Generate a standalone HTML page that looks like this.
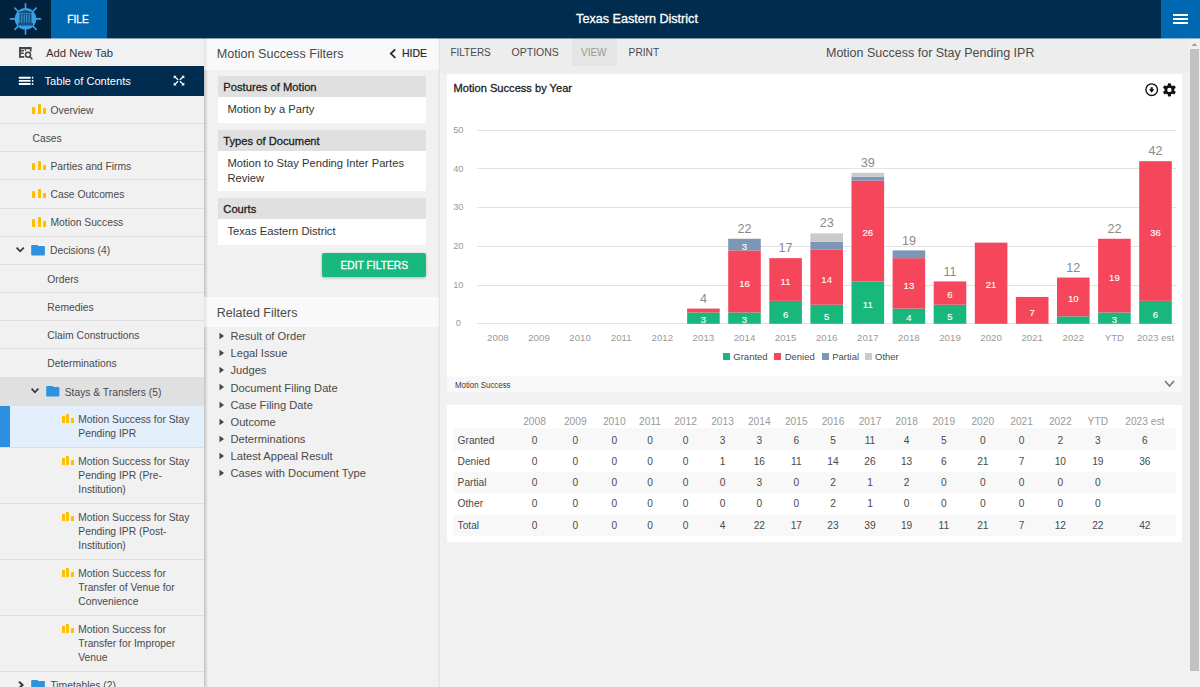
<!DOCTYPE html>
<html><head><meta charset="utf-8"><title>Texas Eastern District</title>
<style>
html,body{margin:0;padding:0;width:1200px;height:687px;overflow:hidden;background:#eeeeee;font-family:"Liberation Sans", sans-serif;}
.r{position:absolute;}
.t{position:absolute;white-space:nowrap;line-height:1;font-family:"Liberation Sans", sans-serif;}
</style></head><body>
<div class="r" style="left:0.00px;top:38.00px;width:204.00px;height:649.00px;background:#f1f1f1;"></div>
<div class="r" style="left:204.00px;top:38.00px;width:235.00px;height:649.00px;background:#f1f1f1;"></div>
<div class="r" style="left:439.00px;top:38.00px;width:761.00px;height:649.00px;background:#f1f1f1;"></div>
<div class="r" style="left:440.00px;top:38.00px;width:760.00px;height:35.00px;background:#ededed;"></div>
<div class="r" style="left:0.00px;top:0.00px;width:1200.00px;height:38.00px;background:#002c4f;"></div>
<div class="r" style="left:0.00px;top:0.00px;width:51.00px;height:38.00px;background:#00223c;"></div>
<div class="r" style="left:51.00px;top:0.00px;width:56.00px;height:38.00px;background:#0067b1;"></div>
<div class="r" style="left:1161.00px;top:0.00px;width:39.00px;height:38.00px;background:#0067b1;"></div>
<div class="t" style="left:50.00px;width:56px;text-align:center;top:15.17px;font-size:10.2px;color:#ffffff;font-weight:normal;-webkit-text-stroke:0.3px #ffffff;">FILE</div>
<div class="t" style="left:537.00px;width:200px;text-align:center;top:12.63px;font-size:12.6px;color:#ffffff;font-weight:normal;-webkit-text-stroke:0.3px #ffffff;">Texas Eastern District</div>
<div class="r" style="left:1173.00px;top:14.00px;width:15.00px;height:2.00px;background:#ffffff;"></div>
<div class="r" style="left:1173.00px;top:18.00px;width:15.00px;height:2.00px;background:#ffffff;"></div>
<div class="r" style="left:1173.00px;top:22.00px;width:15.00px;height:2.00px;background:#ffffff;"></div>
<svg class="r" style="left:0px;top:0px;" width="51" height="38" viewBox="0 0 51 38"><g stroke="#3a9ee4" stroke-width="1.7" stroke-linecap="round"><line x1="35.50" y1="18.80" x2="40.50" y2="18.80"/><line x1="32.57" y1="25.87" x2="36.11" y2="29.41"/><line x1="25.50" y1="28.80" x2="25.50" y2="33.80"/><line x1="18.43" y1="25.87" x2="14.89" y2="29.41"/><line x1="15.50" y1="18.80" x2="10.50" y2="18.80"/><line x1="18.43" y1="11.73" x2="14.89" y2="8.19"/><line x1="25.50" y1="8.80" x2="25.50" y2="3.80"/><line x1="32.57" y1="11.73" x2="36.11" y2="8.19"/></g><circle cx="25.5" cy="18.8" r="10.8" fill="#3a9ee4"/><g fill="#17527f"><path d="M25.5 10 L32.2 12 L32.2 13 L18.8 13 L18.8 12 Z"/><rect x="19.5" y="13.5" width="12" height="9.5"/><rect x="18" y="23" width="15" height="2.6"/></g><g fill="#3a9ee4"><rect x="21.30" y="14.3" width="0.9" height="8.2"/><rect x="23.75" y="14.3" width="0.9" height="8.2"/><rect x="26.20" y="14.3" width="0.9" height="8.2"/><rect x="28.65" y="14.3" width="0.9" height="8.2"/></g></svg>
<div class="t" style="left:46.00px;top:47.93px;font-size:11.3px;color:#333333;font-weight:normal;">Add New Tab</div>
<svg class="r" style="left:14px;top:42px;" width="24" height="20" viewBox="0 0 24 20"><g fill="#454545"><rect x="5.1" y="5.1" width="12.4" height="2.1" rx="0.7"/><rect x="5.1" y="5.1" width="1.8" height="10.6" rx="0.6"/><rect x="15.9" y="5.1" width="1.6" height="4.6"/><rect x="5.1" y="8.1" width="5" height="1.4"/><rect x="5.1" y="10.6" width="4.6" height="1.4"/><rect x="5.1" y="14.1" width="5.2" height="1.6" rx="0.5"/><rect x="11" y="7" width="0.9" height="2"/></g><circle cx="14" cy="12.8" r="2.5" fill="none" stroke="#454545" stroke-width="1.5"/><line x1="15.8" y1="14.6" x2="17.9" y2="16.8" stroke="#454545" stroke-width="1.6" stroke-linecap="round"/></svg>
<div class="r" style="left:0.00px;top:66.00px;width:204.00px;height:30.00px;background:#002c4f;"></div>
<div class="t" style="left:44.50px;top:75.60px;font-size:11.1px;color:#ffffff;font-weight:normal;">Table of Contents</div>
<svg class="r" style="left:14px;top:70px;" width="24" height="20" viewBox="0 0 24 20"><g fill="#ffffff"><rect x="4.8" y="6.75" width="11.8" height="1.9" rx="0.5"/><rect x="17.9" y="6.75" width="1.4" height="1.9"/><rect x="4.8" y="9.95" width="11.8" height="1.9" rx="0.5"/><rect x="17.9" y="9.95" width="1.4" height="1.9"/><rect x="4.8" y="13.1" width="11.8" height="1.9" rx="0.5"/><rect x="17.9" y="13.1" width="1.4" height="1.9"/></g></svg>
<svg class="r" style="left:172px;top:74px;" width="14" height="13" viewBox="0 0 14 13"><g stroke="#ffffff" stroke-width="1.3" fill="none" stroke-linecap="round"><path d="M3 3 L5.8 5.6"/><path d="M11 3 L8.2 5.6"/><path d="M3 10.2 L5.8 7.6"/><path d="M11 10.2 L8.2 7.6"/></g><g fill="#ffffff"><path d="M1.7 1.8 H4.6 L1.7 4.6 Z"/><path d="M12.3 1.8 H9.4 L12.3 4.6 Z"/><path d="M1.7 11.4 H4.6 L1.7 8.6 Z"/><path d="M12.3 11.4 H9.4 L12.3 8.6 Z"/></g></svg>
<div class="r" style="left:32.40px;top:106.80px;width:3.00px;height:7.20px;background:#ffbf00;border-radius:0.6px"></div>
<div class="r" style="left:37.50px;top:104.30px;width:3.00px;height:9.70px;background:#ffbf00;border-radius:0.6px"></div>
<div class="r" style="left:42.60px;top:108.40px;width:3.00px;height:5.60px;background:#ffbf00;border-radius:0.6px"></div>
<div class="t" style="left:50.50px;top:105.58px;font-size:10.3px;color:#4a4a4a;font-weight:normal;">Overview</div>
<div class="r" style="left:0.00px;top:123.15px;width:204.00px;height:1.00px;background:#dedede;"></div>
<div class="t" style="left:32.50px;top:133.73px;font-size:10.3px;color:#4a4a4a;font-weight:normal;">Cases</div>
<div class="r" style="left:0.00px;top:151.30px;width:204.00px;height:1.00px;background:#dedede;"></div>
<div class="r" style="left:32.40px;top:163.10px;width:3.00px;height:7.20px;background:#ffbf00;border-radius:0.6px"></div>
<div class="r" style="left:37.50px;top:160.60px;width:3.00px;height:9.70px;background:#ffbf00;border-radius:0.6px"></div>
<div class="r" style="left:42.60px;top:164.70px;width:3.00px;height:5.60px;background:#ffbf00;border-radius:0.6px"></div>
<div class="t" style="left:50.50px;top:161.88px;font-size:10.3px;color:#4a4a4a;font-weight:normal;">Parties and Firms</div>
<div class="r" style="left:0.00px;top:179.45px;width:204.00px;height:1.00px;background:#dedede;"></div>
<div class="r" style="left:32.40px;top:191.25px;width:3.00px;height:7.20px;background:#ffbf00;border-radius:0.6px"></div>
<div class="r" style="left:37.50px;top:188.75px;width:3.00px;height:9.70px;background:#ffbf00;border-radius:0.6px"></div>
<div class="r" style="left:42.60px;top:192.85px;width:3.00px;height:5.60px;background:#ffbf00;border-radius:0.6px"></div>
<div class="t" style="left:50.50px;top:190.03px;font-size:10.3px;color:#4a4a4a;font-weight:normal;">Case Outcomes</div>
<div class="r" style="left:0.00px;top:207.60px;width:204.00px;height:1.00px;background:#dedede;"></div>
<div class="r" style="left:32.40px;top:219.40px;width:3.00px;height:7.20px;background:#ffbf00;border-radius:0.6px"></div>
<div class="r" style="left:37.50px;top:216.90px;width:3.00px;height:9.70px;background:#ffbf00;border-radius:0.6px"></div>
<div class="r" style="left:42.60px;top:221.00px;width:3.00px;height:5.60px;background:#ffbf00;border-radius:0.6px"></div>
<div class="t" style="left:50.50px;top:218.18px;font-size:10.3px;color:#4a4a4a;font-weight:normal;">Motion Success</div>
<div class="r" style="left:0.00px;top:235.75px;width:204.00px;height:1.00px;background:#dedede;"></div>
<svg class="r" style="left:15.3px;top:246.15000000000003px;" width="10.4" height="7.3" viewBox="0 0 10.4 7.3"><path d="M1.6 1.6 L5.2 5.3999999999999995 L8.8 1.6" fill="none" stroke="#333333" stroke-width="1.6"/></svg>
<svg class="r" style="left:31px;top:245.15000000000003px;" width="15" height="11.3" viewBox="0 0 15 11.3"><path d="M0.2 1 Q0.2 0.1 1 0.1 H6.4 L7.6 1.1 H13.1 Q13.9 1.1 13.9 1.9 V9.700000000000001 Q13.9 10.4 13.1 10.4 H1 Q0.2 10.4 0.2 9.700000000000001 Z" fill="#2d93df"/></svg>
<div class="t" style="left:50.00px;top:246.33px;font-size:10.3px;color:#4a4a4a;font-weight:normal;">Decisions (4)</div>
<div class="r" style="left:0.00px;top:263.90px;width:204.00px;height:1.00px;background:#dedede;"></div>
<div class="t" style="left:47.30px;top:274.58px;font-size:10.3px;color:#4a4a4a;font-weight:normal;">Orders</div>
<div class="r" style="left:0.00px;top:292.05px;width:204.00px;height:1.00px;background:#dedede;"></div>
<div class="t" style="left:47.30px;top:302.73px;font-size:10.3px;color:#4a4a4a;font-weight:normal;">Remedies</div>
<div class="r" style="left:0.00px;top:320.20px;width:204.00px;height:1.00px;background:#dedede;"></div>
<div class="t" style="left:47.30px;top:330.88px;font-size:10.3px;color:#4a4a4a;font-weight:normal;">Claim Constructions</div>
<div class="r" style="left:0.00px;top:348.35px;width:204.00px;height:1.00px;background:#dedede;"></div>
<div class="t" style="left:47.30px;top:359.03px;font-size:10.3px;color:#4a4a4a;font-weight:normal;">Determinations</div>
<div class="r" style="left:0.00px;top:376.50px;width:204.00px;height:1.00px;background:#dedede;"></div>
<div class="r" style="left:0.00px;top:377.50px;width:204.00px;height:28.15px;background:#e0e0e0;"></div>
<svg class="r" style="left:30.3px;top:386.99999999999994px;" width="9.9" height="7.3" viewBox="0 0 9.9 7.3"><path d="M1.6 1.6 L4.95 5.3999999999999995 L8.3 1.6" fill="none" stroke="#333333" stroke-width="1.6"/></svg>
<svg class="r" style="left:45.8px;top:386.29999999999995px;" width="14.5" height="11.3" viewBox="0 0 14.5 11.3"><path d="M0.2 1 Q0.2 0.1 1 0.1 H6.4 L7.6 1.1 H12.6 Q13.4 1.1 13.4 1.9 V9.700000000000001 Q13.4 10.4 12.6 10.4 H1 Q0.2 10.4 0.2 9.700000000000001 Z" fill="#2d93df"/></svg>
<div class="t" style="left:64.70px;top:387.98px;font-size:10.3px;color:#4a4a4a;font-weight:normal;">Stays &amp; Transfers (5)</div>
<div class="r" style="left:0.00px;top:405.65px;width:204.00px;height:42.00px;background:#e3effb;"></div>
<div class="r" style="left:0.00px;top:405.65px;width:10.00px;height:42.00px;background:#2d8fe0;"></div>
<div class="r" style="left:61.80px;top:416.15px;width:3.05px;height:7.00px;background:#ffbf00;border-radius:0.6px"></div>
<div class="r" style="left:66.30px;top:414.05px;width:3.05px;height:9.10px;background:#ffbf00;border-radius:0.6px"></div>
<div class="r" style="left:70.80px;top:418.05px;width:3.05px;height:5.10px;background:#ffbf00;border-radius:0.6px"></div>
<div class="t" style="left:78.30px;top:414.73px;font-size:10.3px;color:#4a4a4a;font-weight:normal;">Motion Success for Stay</div>
<div class="t" style="left:78.30px;top:428.73px;font-size:10.3px;color:#4a4a4a;font-weight:normal;">Pending IPR</div>
<div class="r" style="left:0.00px;top:446.65px;width:204.00px;height:1.00px;background:#dedede;"></div>
<div class="r" style="left:61.80px;top:458.15px;width:3.05px;height:7.00px;background:#ffbf00;border-radius:0.6px"></div>
<div class="r" style="left:66.30px;top:456.05px;width:3.05px;height:9.10px;background:#ffbf00;border-radius:0.6px"></div>
<div class="r" style="left:70.80px;top:460.05px;width:3.05px;height:5.10px;background:#ffbf00;border-radius:0.6px"></div>
<div class="t" style="left:78.30px;top:456.73px;font-size:10.3px;color:#4a4a4a;font-weight:normal;">Motion Success for Stay</div>
<div class="t" style="left:78.30px;top:470.73px;font-size:10.3px;color:#4a4a4a;font-weight:normal;">Pending IPR (Pre-</div>
<div class="t" style="left:78.30px;top:484.73px;font-size:10.3px;color:#4a4a4a;font-weight:normal;">Institution)</div>
<div class="r" style="left:0.00px;top:502.65px;width:204.00px;height:1.00px;background:#dedede;"></div>
<div class="r" style="left:61.80px;top:514.15px;width:3.05px;height:7.00px;background:#ffbf00;border-radius:0.6px"></div>
<div class="r" style="left:66.30px;top:512.05px;width:3.05px;height:9.10px;background:#ffbf00;border-radius:0.6px"></div>
<div class="r" style="left:70.80px;top:516.05px;width:3.05px;height:5.10px;background:#ffbf00;border-radius:0.6px"></div>
<div class="t" style="left:78.30px;top:512.73px;font-size:10.3px;color:#4a4a4a;font-weight:normal;">Motion Success for Stay</div>
<div class="t" style="left:78.30px;top:526.73px;font-size:10.3px;color:#4a4a4a;font-weight:normal;">Pending IPR (Post-</div>
<div class="t" style="left:78.30px;top:540.73px;font-size:10.3px;color:#4a4a4a;font-weight:normal;">Institution)</div>
<div class="r" style="left:0.00px;top:558.65px;width:204.00px;height:1.00px;background:#dedede;"></div>
<div class="r" style="left:61.80px;top:570.15px;width:3.05px;height:7.00px;background:#ffbf00;border-radius:0.6px"></div>
<div class="r" style="left:66.30px;top:568.05px;width:3.05px;height:9.10px;background:#ffbf00;border-radius:0.6px"></div>
<div class="r" style="left:70.80px;top:572.05px;width:3.05px;height:5.10px;background:#ffbf00;border-radius:0.6px"></div>
<div class="t" style="left:78.30px;top:568.73px;font-size:10.3px;color:#4a4a4a;font-weight:normal;">Motion Success for</div>
<div class="t" style="left:78.30px;top:582.73px;font-size:10.3px;color:#4a4a4a;font-weight:normal;">Transfer of Venue for</div>
<div class="t" style="left:78.30px;top:596.73px;font-size:10.3px;color:#4a4a4a;font-weight:normal;">Convenience</div>
<div class="r" style="left:0.00px;top:614.65px;width:204.00px;height:1.00px;background:#dedede;"></div>
<div class="r" style="left:61.80px;top:626.15px;width:3.05px;height:7.00px;background:#ffbf00;border-radius:0.6px"></div>
<div class="r" style="left:66.30px;top:624.05px;width:3.05px;height:9.10px;background:#ffbf00;border-radius:0.6px"></div>
<div class="r" style="left:70.80px;top:628.05px;width:3.05px;height:5.10px;background:#ffbf00;border-radius:0.6px"></div>
<div class="t" style="left:78.30px;top:624.73px;font-size:10.3px;color:#4a4a4a;font-weight:normal;">Motion Success for</div>
<div class="t" style="left:78.30px;top:638.73px;font-size:10.3px;color:#4a4a4a;font-weight:normal;">Transfer for Improper</div>
<div class="t" style="left:78.30px;top:652.73px;font-size:10.3px;color:#4a4a4a;font-weight:normal;">Venue</div>
<div class="r" style="left:0.00px;top:670.65px;width:204.00px;height:1.00px;background:#dedede;"></div>
<svg class="r" style="left:16px;top:679.6499999999999px;" width="10" height="10" viewBox="0 0 10 10"><path d="M3 1.8 L6.6 5 L3 8.2" fill="none" stroke="#333333" stroke-width="1.9"/></svg>
<svg class="r" style="left:31.2px;top:680.2499999999999px;" width="15" height="11.3" viewBox="0 0 15 11.3"><path d="M0.2 1 Q0.2 0.1 1 0.1 H6.4 L7.6 1.1 H13.1 Q13.9 1.1 13.9 1.9 V9.700000000000001 Q13.9 10.4 13.1 10.4 H1 Q0.2 10.4 0.2 9.700000000000001 Z" fill="#2d93df"/></svg>
<div class="t" style="left:50.40px;top:681.33px;font-size:10.3px;color:#4a4a4a;font-weight:normal;">Timetables (2)</div>
<div class="r" style="left:204.00px;top:38.00px;width:4.00px;height:649.00px;background:linear-gradient(to right, rgba(0,0,0,0.10), rgba(0,0,0,0));"></div>
<div class="r" style="left:204.00px;top:38.00px;width:235.00px;height:31.50px;background:#f9f9f9;"></div>
<div class="t" style="left:216.80px;top:48.43px;font-size:12.6px;color:#4a4a4a;font-weight:normal;">Motion Success Filters</div>
<svg class="r" style="left:386px;top:46px;" width="12" height="14" viewBox="0 0 12 14"><path d="M9.3 3.4 L4.8 7.6 L9.3 11.8" fill="none" stroke="#222222" stroke-width="1.7"/></svg>
<div class="t" style="left:402.00px;top:48.31px;font-size:10.5px;color:#222222;font-weight:normal;-webkit-text-stroke:0.15px #222;">HIDE</div>
<div class="r" style="left:218.20px;top:76.30px;width:207.60px;height:20.30px;background:#e0e0e0;"></div>
<div class="t" style="left:223.30px;top:81.92px;font-size:11.2px;color:#222222;font-weight:normal;-webkit-text-stroke:0.3px #222222;">Postures of Motion</div>
<div class="r" style="left:218.20px;top:96.60px;width:207.60px;height:26.40px;background:#ffffff;"></div>
<div class="t" style="left:227.40px;top:104.32px;font-size:11.2px;color:#333333;font-weight:normal;">Motion by a Party</div>
<div class="r" style="left:218.20px;top:129.90px;width:207.60px;height:21.00px;background:#e0e0e0;"></div>
<div class="t" style="left:223.30px;top:135.52px;font-size:11.2px;color:#222222;font-weight:normal;-webkit-text-stroke:0.3px #222222;">Types of Document</div>
<div class="r" style="left:218.20px;top:150.90px;width:207.60px;height:40.40px;background:#ffffff;"></div>
<div class="t" style="left:227.40px;top:157.72px;font-size:11.2px;color:#333333;font-weight:normal;">Motion to Stay Pending Inter Partes</div>
<div class="t" style="left:227.40px;top:172.52px;font-size:11.2px;color:#333333;font-weight:normal;">Review</div>
<div class="r" style="left:218.20px;top:198.20px;width:207.60px;height:20.80px;background:#e0e0e0;"></div>
<div class="t" style="left:223.30px;top:203.82px;font-size:11.2px;color:#222222;font-weight:normal;-webkit-text-stroke:0.3px #222222;">Courts</div>
<div class="r" style="left:218.20px;top:219.00px;width:207.60px;height:26.40px;background:#ffffff;"></div>
<div class="t" style="left:227.40px;top:225.82px;font-size:11.2px;color:#333333;font-weight:normal;">Texas Eastern District</div>
<div class="r" style="left:322.30px;top:252.90px;width:103.40px;height:24.20px;background:#19b87e;box-shadow:0 1px 3px rgba(0,0,0,0.25);border-radius:2px"></div>
<div class="t" style="left:324.30px;width:100px;text-align:center;top:260.98px;font-size:10.3px;color:#ffffff;font-weight:normal;-webkit-text-stroke:0.3px #ffffff;">EDIT FILTERS</div>
<div class="r" style="left:204.00px;top:296.70px;width:235.00px;height:30.50px;background:#f9f9f9;"></div>
<div class="t" style="left:216.80px;top:307.42px;font-size:12.5px;color:#4a4a4a;font-weight:normal;">Related Filters</div>
<svg class="r" style="left:219px;top:332px;" width="6" height="8" viewBox="0 0 6 8"><path d="M0.5 0.8 L5 4 L0.5 7.2 Z" fill="#444444"/></svg>
<div class="t" style="left:230.50px;top:331.36px;font-size:11.15px;color:#4a4a4a;font-weight:normal;">Result of Order</div>
<svg class="r" style="left:219px;top:349px;" width="6" height="8" viewBox="0 0 6 8"><path d="M0.5 0.8 L5 4 L0.5 7.2 Z" fill="#444444"/></svg>
<div class="t" style="left:230.50px;top:348.41px;font-size:11.15px;color:#4a4a4a;font-weight:normal;">Legal Issue</div>
<svg class="r" style="left:219px;top:366px;" width="6" height="8" viewBox="0 0 6 8"><path d="M0.5 0.8 L5 4 L0.5 7.2 Z" fill="#444444"/></svg>
<div class="t" style="left:230.50px;top:365.46px;font-size:11.15px;color:#4a4a4a;font-weight:normal;">Judges</div>
<svg class="r" style="left:219px;top:383px;" width="6" height="8" viewBox="0 0 6 8"><path d="M0.5 0.8 L5 4 L0.5 7.2 Z" fill="#444444"/></svg>
<div class="t" style="left:230.50px;top:382.51px;font-size:11.15px;color:#4a4a4a;font-weight:normal;">Document Filing Date</div>
<svg class="r" style="left:219px;top:401px;" width="6" height="8" viewBox="0 0 6 8"><path d="M0.5 0.8 L5 4 L0.5 7.2 Z" fill="#444444"/></svg>
<div class="t" style="left:230.50px;top:399.56px;font-size:11.15px;color:#4a4a4a;font-weight:normal;">Case Filing Date</div>
<svg class="r" style="left:219px;top:418px;" width="6" height="8" viewBox="0 0 6 8"><path d="M0.5 0.8 L5 4 L0.5 7.2 Z" fill="#444444"/></svg>
<div class="t" style="left:230.50px;top:416.61px;font-size:11.15px;color:#4a4a4a;font-weight:normal;">Outcome</div>
<svg class="r" style="left:219px;top:435px;" width="6" height="8" viewBox="0 0 6 8"><path d="M0.5 0.8 L5 4 L0.5 7.2 Z" fill="#444444"/></svg>
<div class="t" style="left:230.50px;top:433.66px;font-size:11.15px;color:#4a4a4a;font-weight:normal;">Determinations</div>
<svg class="r" style="left:219px;top:452px;" width="6" height="8" viewBox="0 0 6 8"><path d="M0.5 0.8 L5 4 L0.5 7.2 Z" fill="#444444"/></svg>
<div class="t" style="left:230.50px;top:450.71px;font-size:11.15px;color:#4a4a4a;font-weight:normal;">Latest Appeal Result</div>
<svg class="r" style="left:219px;top:469px;" width="6" height="8" viewBox="0 0 6 8"><path d="M0.5 0.8 L5 4 L0.5 7.2 Z" fill="#444444"/></svg>
<div class="t" style="left:230.50px;top:467.76px;font-size:11.15px;color:#4a4a4a;font-weight:normal;">Cases with Document Type</div>
<div class="r" style="left:436.00px;top:38.00px;width:3.00px;height:649.00px;background:linear-gradient(to right, rgba(0,0,0,0.0), rgba(0,0,0,0.02));"></div>
<div class="r" style="left:204.00px;top:38.00px;width:4.00px;height:649.00px;background:linear-gradient(to right, rgba(0,0,0,0.10), rgba(0,0,0,0));"></div>
<div class="r" style="left:439.00px;top:38.00px;width:1.00px;height:649.00px;background:#e3e3e3;"></div>
<div class="r" style="left:571.60px;top:38.00px;width:45.40px;height:27.60px;background:#e5e5e5;"></div>
<div class="t" style="left:450.40px;top:47.94px;font-size:10px;color:#4a4a4a;font-weight:normal;">FILTERS</div>
<div class="t" style="left:511.60px;top:47.01px;font-size:10.5px;color:#4a4a4a;font-weight:normal;">OPTIONS</div>
<div class="t" style="left:581.00px;top:47.94px;font-size:10px;color:#9a9a9a;font-weight:normal;">VIEW</div>
<div class="t" style="left:628.60px;top:47.77px;font-size:10.2px;color:#4a4a4a;font-weight:normal;">PRINT</div>
<div class="t" style="left:826.00px;top:46.92px;font-size:12.5px;color:#4a4a4a;font-weight:normal;">Motion Success for Stay Pending IPR</div>
<div class="r" style="left:447.00px;top:73.60px;width:735.20px;height:302.60px;background:#ffffff;"></div>
<div class="t" style="left:453.60px;top:83.40px;font-size:11.1px;color:#222222;font-weight:normal;-webkit-text-stroke:0.3px #222222;">Motion Success by Year</div>
<svg class="r" style="left:1143px;top:81px;" width="18" height="18" viewBox="0 0 18 18"><circle cx="8.7" cy="8.7" r="5.8" fill="none" stroke="#111" stroke-width="1.35"/><rect x="7.6" y="6.2" width="2.2" height="2.6" fill="#111"/><path d="M6 8.3 L11.4 8.3 L8.7 11.7 Z" fill="#111"/></svg>
<svg class="r" style="left:1160px;top:81px;" width="18" height="18" viewBox="0 0 18 18"><g transform="translate(9.4,8.9)" fill="#111"><rect x="-1.55" y="-6.6" width="3.1" height="3.4" rx="0.7" transform="rotate(0)"/><rect x="-1.55" y="-6.6" width="3.1" height="3.4" rx="0.7" transform="rotate(60)"/><rect x="-1.55" y="-6.6" width="3.1" height="3.4" rx="0.7" transform="rotate(120)"/><rect x="-1.55" y="-6.6" width="3.1" height="3.4" rx="0.7" transform="rotate(180)"/><rect x="-1.55" y="-6.6" width="3.1" height="3.4" rx="0.7" transform="rotate(240)"/><rect x="-1.55" y="-6.6" width="3.1" height="3.4" rx="0.7" transform="rotate(300)"/><circle r="4.9"/><circle r="2.2" fill="#fff"/></g></svg>
<div class="r" style="left:477.00px;top:323.30px;width:698.60px;height:1.00px;background:#e3e3e3;"></div>
<div class="t" style="left:448.30px;width:20px;text-align:center;top:319.43px;font-size:9.3px;color:#9a9a9a;font-weight:normal;">0</div>
<div class="r" style="left:477.00px;top:284.81px;width:698.60px;height:1.00px;background:#e3e3e3;"></div>
<div class="t" style="left:448.30px;width:20px;text-align:center;top:280.94px;font-size:9.3px;color:#9a9a9a;font-weight:normal;">10</div>
<div class="r" style="left:477.00px;top:246.02px;width:698.60px;height:1.00px;background:#e3e3e3;"></div>
<div class="t" style="left:448.30px;width:20px;text-align:center;top:242.15px;font-size:9.3px;color:#9a9a9a;font-weight:normal;">20</div>
<div class="r" style="left:477.00px;top:207.23px;width:698.60px;height:1.00px;background:#e3e3e3;"></div>
<div class="t" style="left:448.30px;width:20px;text-align:center;top:203.36px;font-size:9.3px;color:#9a9a9a;font-weight:normal;">30</div>
<div class="r" style="left:477.00px;top:168.44px;width:698.60px;height:1.00px;background:#e3e3e3;"></div>
<div class="t" style="left:448.30px;width:20px;text-align:center;top:164.57px;font-size:9.3px;color:#9a9a9a;font-weight:normal;">40</div>
<div class="r" style="left:477.00px;top:129.65px;width:698.60px;height:1.00px;background:#e3e3e3;"></div>
<div class="t" style="left:448.30px;width:20px;text-align:center;top:125.78px;font-size:9.3px;color:#9a9a9a;font-weight:normal;">50</div>
<div class="t" style="left:467.90px;width:60px;text-align:center;top:332.79px;font-size:9.7px;color:#9a9a9a;font-weight:normal;">2008</div>
<div class="t" style="left:509.00px;width:60px;text-align:center;top:332.79px;font-size:9.7px;color:#9a9a9a;font-weight:normal;">2009</div>
<div class="t" style="left:550.10px;width:60px;text-align:center;top:332.79px;font-size:9.7px;color:#9a9a9a;font-weight:normal;">2010</div>
<div class="t" style="left:591.20px;width:60px;text-align:center;top:332.79px;font-size:9.7px;color:#9a9a9a;font-weight:normal;">2011</div>
<div class="t" style="left:632.30px;width:60px;text-align:center;top:332.79px;font-size:9.7px;color:#9a9a9a;font-weight:normal;">2012</div>
<div class="t" style="left:673.40px;width:60px;text-align:center;top:332.79px;font-size:9.7px;color:#9a9a9a;font-weight:normal;">2013</div>
<div class="t" style="left:683.40px;width:40px;text-align:center;top:292.72px;font-size:12.6px;color:#8a8a8a;font-weight:normal;">4</div>
<div class="t" style="left:714.50px;width:60px;text-align:center;top:332.79px;font-size:9.7px;color:#9a9a9a;font-weight:normal;">2014</div>
<div class="t" style="left:724.50px;width:40px;text-align:center;top:222.90px;font-size:12.6px;color:#8a8a8a;font-weight:normal;">22</div>
<div class="t" style="left:755.60px;width:60px;text-align:center;top:332.79px;font-size:9.7px;color:#9a9a9a;font-weight:normal;">2015</div>
<div class="t" style="left:765.60px;width:40px;text-align:center;top:242.29px;font-size:12.6px;color:#8a8a8a;font-weight:normal;">17</div>
<div class="t" style="left:796.70px;width:60px;text-align:center;top:332.79px;font-size:9.7px;color:#9a9a9a;font-weight:normal;">2016</div>
<div class="t" style="left:806.70px;width:40px;text-align:center;top:216.53px;font-size:12.6px;color:#8a8a8a;font-weight:normal;">23</div>
<div class="t" style="left:837.80px;width:60px;text-align:center;top:332.79px;font-size:9.7px;color:#9a9a9a;font-weight:normal;">2017</div>
<div class="t" style="left:847.80px;width:40px;text-align:center;top:156.95px;font-size:12.6px;color:#8a8a8a;font-weight:normal;">39</div>
<div class="t" style="left:878.90px;width:60px;text-align:center;top:332.79px;font-size:9.7px;color:#9a9a9a;font-weight:normal;">2018</div>
<div class="t" style="left:888.90px;width:40px;text-align:center;top:234.53px;font-size:12.6px;color:#8a8a8a;font-weight:normal;">19</div>
<div class="t" style="left:920.00px;width:60px;text-align:center;top:332.79px;font-size:9.7px;color:#9a9a9a;font-weight:normal;">2019</div>
<div class="t" style="left:930.00px;width:40px;text-align:center;top:265.57px;font-size:12.6px;color:#8a8a8a;font-weight:normal;">11</div>
<div class="t" style="left:961.10px;width:60px;text-align:center;top:332.79px;font-size:9.7px;color:#9a9a9a;font-weight:normal;">2020</div>
<div class="t" style="left:1002.20px;width:60px;text-align:center;top:332.79px;font-size:9.7px;color:#9a9a9a;font-weight:normal;">2021</div>
<div class="t" style="left:1043.30px;width:60px;text-align:center;top:332.79px;font-size:9.7px;color:#9a9a9a;font-weight:normal;">2022</div>
<div class="t" style="left:1053.30px;width:40px;text-align:center;top:261.69px;font-size:12.6px;color:#8a8a8a;font-weight:normal;">12</div>
<div class="t" style="left:1084.40px;width:60px;text-align:center;top:332.79px;font-size:9.7px;color:#9a9a9a;font-weight:normal;">YTD</div>
<div class="t" style="left:1094.40px;width:40px;text-align:center;top:222.90px;font-size:12.6px;color:#8a8a8a;font-weight:normal;">22</div>
<div class="t" style="left:1125.50px;width:60px;text-align:center;top:332.79px;font-size:9.7px;color:#9a9a9a;font-weight:normal;">2023 est</div>
<div class="t" style="left:1135.50px;width:40px;text-align:center;top:145.32px;font-size:12.6px;color:#8a8a8a;font-weight:normal;">42</div>
<svg class="r" style="left:0px;top:0px;pointer-events:none" width="1200" height="400" viewBox="0 0 1200 400"><rect x="687.10" y="312.46" width="32.6" height="11.34" fill="#18b87d"/><rect x="687.10" y="308.58" width="32.6" height="3.88" fill="#f5465b"/><rect x="728.20" y="312.46" width="32.6" height="11.34" fill="#18b87d"/><rect x="728.20" y="250.40" width="32.6" height="62.06" fill="#f5465b"/><rect x="728.20" y="238.76" width="32.6" height="11.64" fill="#7c96b5"/><rect x="769.30" y="300.83" width="32.6" height="22.97" fill="#18b87d"/><rect x="769.30" y="258.16" width="32.6" height="42.67" fill="#f5465b"/><rect x="810.40" y="304.71" width="32.6" height="19.09" fill="#18b87d"/><rect x="810.40" y="249.80" width="32.6" height="54.91" fill="#f5465b"/><rect x="810.40" y="241.70" width="32.6" height="8.10" fill="#7c96b5"/><rect x="810.40" y="233.40" width="32.6" height="8.30" fill="#cbcbcb"/><rect x="851.50" y="281.43" width="32.6" height="42.37" fill="#18b87d"/><rect x="851.50" y="180.58" width="32.6" height="100.85" fill="#f5465b"/><rect x="851.50" y="176.70" width="32.6" height="3.88" fill="#7c96b5"/><rect x="851.50" y="172.82" width="32.6" height="3.88" fill="#cbcbcb"/><rect x="892.60" y="308.58" width="32.6" height="15.22" fill="#18b87d"/><rect x="892.60" y="258.16" width="32.6" height="50.43" fill="#f5465b"/><rect x="892.60" y="250.40" width="32.6" height="7.76" fill="#7c96b5"/><rect x="933.70" y="304.71" width="32.6" height="19.09" fill="#18b87d"/><rect x="933.70" y="281.43" width="32.6" height="23.27" fill="#f5465b"/><rect x="974.80" y="242.64" width="32.6" height="81.16" fill="#f5465b"/><rect x="1015.90" y="296.95" width="32.6" height="26.85" fill="#f5465b"/><rect x="1057.00" y="316.34" width="32.6" height="7.46" fill="#18b87d"/><rect x="1057.00" y="277.55" width="32.6" height="38.79" fill="#f5465b"/><rect x="1098.10" y="312.46" width="32.6" height="11.34" fill="#18b87d"/><rect x="1098.10" y="238.76" width="32.6" height="73.70" fill="#f5465b"/><rect x="1139.20" y="300.83" width="32.6" height="22.97" fill="#18b87d"/><rect x="1139.20" y="161.18" width="32.6" height="139.64" fill="#f5465b"/></svg>
<div class="t" style="left:688.40px;width:30px;text-align:center;top:315.41px;font-size:9.6px;color:#ffffff;font-weight:normal;-webkit-text-stroke:0.12px #fff;">3</div>
<div class="t" style="left:729.50px;width:30px;text-align:center;top:315.41px;font-size:9.6px;color:#ffffff;font-weight:normal;-webkit-text-stroke:0.12px #fff;">3</div>
<div class="t" style="left:729.50px;width:30px;text-align:center;top:278.70px;font-size:9.6px;color:#ffffff;font-weight:normal;-webkit-text-stroke:0.12px #fff;">16</div>
<div class="t" style="left:729.50px;width:30px;text-align:center;top:241.85px;font-size:9.6px;color:#ffffff;font-weight:normal;-webkit-text-stroke:0.12px #fff;">3</div>
<div class="t" style="left:770.60px;width:30px;text-align:center;top:309.59px;font-size:9.6px;color:#ffffff;font-weight:normal;-webkit-text-stroke:0.12px #fff;">6</div>
<div class="t" style="left:770.60px;width:30px;text-align:center;top:276.77px;font-size:9.6px;color:#ffffff;font-weight:normal;-webkit-text-stroke:0.12px #fff;">11</div>
<div class="t" style="left:811.70px;width:30px;text-align:center;top:311.53px;font-size:9.6px;color:#ffffff;font-weight:normal;-webkit-text-stroke:0.12px #fff;">5</div>
<div class="t" style="left:811.70px;width:30px;text-align:center;top:274.53px;font-size:9.6px;color:#ffffff;font-weight:normal;-webkit-text-stroke:0.12px #fff;">14</div>
<div class="t" style="left:852.80px;width:30px;text-align:center;top:299.89px;font-size:9.6px;color:#ffffff;font-weight:normal;-webkit-text-stroke:0.12px #fff;">11</div>
<div class="t" style="left:852.80px;width:30px;text-align:center;top:228.28px;font-size:9.6px;color:#ffffff;font-weight:normal;-webkit-text-stroke:0.12px #fff;">26</div>
<div class="t" style="left:893.90px;width:30px;text-align:center;top:313.47px;font-size:9.6px;color:#ffffff;font-weight:normal;-webkit-text-stroke:0.12px #fff;">4</div>
<div class="t" style="left:893.90px;width:30px;text-align:center;top:280.64px;font-size:9.6px;color:#ffffff;font-weight:normal;-webkit-text-stroke:0.12px #fff;">13</div>
<div class="t" style="left:935.00px;width:30px;text-align:center;top:311.53px;font-size:9.6px;color:#ffffff;font-weight:normal;-webkit-text-stroke:0.12px #fff;">5</div>
<div class="t" style="left:935.00px;width:30px;text-align:center;top:290.34px;font-size:9.6px;color:#ffffff;font-weight:normal;-webkit-text-stroke:0.12px #fff;">6</div>
<div class="t" style="left:976.10px;width:30px;text-align:center;top:280.49px;font-size:9.6px;color:#ffffff;font-weight:normal;-webkit-text-stroke:0.12px #fff;">21</div>
<div class="t" style="left:1017.20px;width:30px;text-align:center;top:307.65px;font-size:9.6px;color:#ffffff;font-weight:normal;-webkit-text-stroke:0.12px #fff;">7</div>
<div class="t" style="left:1058.30px;width:30px;text-align:center;top:294.22px;font-size:9.6px;color:#ffffff;font-weight:normal;-webkit-text-stroke:0.12px #fff;">10</div>
<div class="t" style="left:1099.40px;width:30px;text-align:center;top:315.41px;font-size:9.6px;color:#ffffff;font-weight:normal;-webkit-text-stroke:0.12px #fff;">3</div>
<div class="t" style="left:1099.40px;width:30px;text-align:center;top:272.89px;font-size:9.6px;color:#ffffff;font-weight:normal;-webkit-text-stroke:0.12px #fff;">19</div>
<div class="t" style="left:1140.50px;width:30px;text-align:center;top:309.59px;font-size:9.6px;color:#ffffff;font-weight:normal;-webkit-text-stroke:0.12px #fff;">6</div>
<div class="t" style="left:1140.50px;width:30px;text-align:center;top:228.28px;font-size:9.6px;color:#ffffff;font-weight:normal;-webkit-text-stroke:0.12px #fff;">36</div>
<div class="r" style="left:723.30px;top:353.30px;width:7.20px;height:7.00px;background:#18b87d;"></div>
<div class="t" style="left:733.30px;top:352.16px;font-size:9.5px;color:#4a4a4a;font-weight:normal;">Granted</div>
<div class="r" style="left:774.20px;top:353.30px;width:7.20px;height:7.00px;background:#f5465b;"></div>
<div class="t" style="left:784.70px;top:352.16px;font-size:9.5px;color:#4a4a4a;font-weight:normal;">Denied</div>
<div class="r" style="left:822.00px;top:353.30px;width:7.20px;height:7.00px;background:#7c96b5;"></div>
<div class="t" style="left:832.20px;top:352.16px;font-size:9.5px;color:#4a4a4a;font-weight:normal;">Partial</div>
<div class="r" style="left:865.30px;top:353.30px;width:7.20px;height:7.00px;background:#cbcbcb;"></div>
<div class="t" style="left:875.00px;top:352.16px;font-size:9.5px;color:#4a4a4a;font-weight:normal;">Other</div>
<div class="r" style="left:447.00px;top:376.20px;width:735.20px;height:15.70px;background:#f8f8f8;"></div>
<div class="t" style="left:455.20px;top:380.07px;font-size:9.6px;color:#3a3a3a;font-weight:normal;transform:scaleX(0.82);transform-origin:0 0;">Motion Success</div>
<svg class="r" style="left:1163px;top:379px;" width="13" height="10" viewBox="0 0 13 10"><path d="M2 2 L6.5 7 L11 2" fill="none" stroke="#777" stroke-width="1.6"/></svg>
<div class="r" style="left:447.00px;top:405.20px;width:735.20px;height:137.00px;background:#ffffff;"></div>
<div class="t" style="left:504.50px;width:60px;text-align:center;top:416.97px;font-size:10.2px;color:#9a9a9a;font-weight:normal;">2008</div>
<div class="t" style="left:545.30px;width:60px;text-align:center;top:416.97px;font-size:10.2px;color:#9a9a9a;font-weight:normal;">2009</div>
<div class="t" style="left:584.30px;width:60px;text-align:center;top:416.97px;font-size:10.2px;color:#9a9a9a;font-weight:normal;">2010</div>
<div class="t" style="left:620.00px;width:60px;text-align:center;top:416.97px;font-size:10.2px;color:#9a9a9a;font-weight:normal;">2011</div>
<div class="t" style="left:655.50px;width:60px;text-align:center;top:416.97px;font-size:10.2px;color:#9a9a9a;font-weight:normal;">2012</div>
<div class="t" style="left:692.50px;width:60px;text-align:center;top:416.97px;font-size:10.2px;color:#9a9a9a;font-weight:normal;">2013</div>
<div class="t" style="left:729.30px;width:60px;text-align:center;top:416.97px;font-size:10.2px;color:#9a9a9a;font-weight:normal;">2014</div>
<div class="t" style="left:766.30px;width:60px;text-align:center;top:416.97px;font-size:10.2px;color:#9a9a9a;font-weight:normal;">2015</div>
<div class="t" style="left:803.00px;width:60px;text-align:center;top:416.97px;font-size:10.2px;color:#9a9a9a;font-weight:normal;">2016</div>
<div class="t" style="left:840.00px;width:60px;text-align:center;top:416.97px;font-size:10.2px;color:#9a9a9a;font-weight:normal;">2017</div>
<div class="t" style="left:876.60px;width:60px;text-align:center;top:416.97px;font-size:10.2px;color:#9a9a9a;font-weight:normal;">2018</div>
<div class="t" style="left:913.80px;width:60px;text-align:center;top:416.97px;font-size:10.2px;color:#9a9a9a;font-weight:normal;">2019</div>
<div class="t" style="left:952.80px;width:60px;text-align:center;top:416.97px;font-size:10.2px;color:#9a9a9a;font-weight:normal;">2020</div>
<div class="t" style="left:991.60px;width:60px;text-align:center;top:416.97px;font-size:10.2px;color:#9a9a9a;font-weight:normal;">2021</div>
<div class="t" style="left:1030.30px;width:60px;text-align:center;top:416.97px;font-size:10.2px;color:#9a9a9a;font-weight:normal;">2022</div>
<div class="t" style="left:1067.80px;width:60px;text-align:center;top:416.97px;font-size:10.2px;color:#9a9a9a;font-weight:normal;">YTD</div>
<div class="t" style="left:1114.80px;width:60px;text-align:center;top:416.97px;font-size:10.2px;color:#9a9a9a;font-weight:normal;">2023 est</div>
<div class="r" style="left:453.20px;top:428.00px;width:722.60px;height:21.90px;background:#f8f8f8;"></div>
<div class="t" style="left:457.60px;top:435.77px;font-size:10.2px;color:#4a4a4a;font-weight:normal;">Granted</div>
<div class="t" style="left:514.50px;width:40px;text-align:center;top:435.77px;font-size:10.2px;color:#4a4a4a;font-weight:normal;">0</div>
<div class="t" style="left:555.30px;width:40px;text-align:center;top:435.77px;font-size:10.2px;color:#4a4a4a;font-weight:normal;">0</div>
<div class="t" style="left:594.30px;width:40px;text-align:center;top:435.77px;font-size:10.2px;color:#4a4a4a;font-weight:normal;">0</div>
<div class="t" style="left:630.00px;width:40px;text-align:center;top:435.77px;font-size:10.2px;color:#4a4a4a;font-weight:normal;">0</div>
<div class="t" style="left:665.50px;width:40px;text-align:center;top:435.77px;font-size:10.2px;color:#4a4a4a;font-weight:normal;">0</div>
<div class="t" style="left:702.50px;width:40px;text-align:center;top:435.77px;font-size:10.2px;color:#4a4a4a;font-weight:normal;">3</div>
<div class="t" style="left:739.30px;width:40px;text-align:center;top:435.77px;font-size:10.2px;color:#4a4a4a;font-weight:normal;">3</div>
<div class="t" style="left:776.30px;width:40px;text-align:center;top:435.77px;font-size:10.2px;color:#4a4a4a;font-weight:normal;">6</div>
<div class="t" style="left:813.00px;width:40px;text-align:center;top:435.77px;font-size:10.2px;color:#4a4a4a;font-weight:normal;">5</div>
<div class="t" style="left:850.00px;width:40px;text-align:center;top:435.77px;font-size:10.2px;color:#4a4a4a;font-weight:normal;">11</div>
<div class="t" style="left:886.60px;width:40px;text-align:center;top:435.77px;font-size:10.2px;color:#4a4a4a;font-weight:normal;">4</div>
<div class="t" style="left:923.80px;width:40px;text-align:center;top:435.77px;font-size:10.2px;color:#4a4a4a;font-weight:normal;">5</div>
<div class="t" style="left:962.80px;width:40px;text-align:center;top:435.77px;font-size:10.2px;color:#4a4a4a;font-weight:normal;">0</div>
<div class="t" style="left:1001.60px;width:40px;text-align:center;top:435.77px;font-size:10.2px;color:#4a4a4a;font-weight:normal;">0</div>
<div class="t" style="left:1040.30px;width:40px;text-align:center;top:435.77px;font-size:10.2px;color:#4a4a4a;font-weight:normal;">2</div>
<div class="t" style="left:1077.80px;width:40px;text-align:center;top:435.77px;font-size:10.2px;color:#4a4a4a;font-weight:normal;">3</div>
<div class="t" style="left:1124.80px;width:40px;text-align:center;top:435.77px;font-size:10.2px;color:#4a4a4a;font-weight:normal;">6</div>
<div class="t" style="left:457.60px;top:456.67px;font-size:10.2px;color:#4a4a4a;font-weight:normal;">Denied</div>
<div class="t" style="left:514.50px;width:40px;text-align:center;top:456.67px;font-size:10.2px;color:#4a4a4a;font-weight:normal;">0</div>
<div class="t" style="left:555.30px;width:40px;text-align:center;top:456.67px;font-size:10.2px;color:#4a4a4a;font-weight:normal;">0</div>
<div class="t" style="left:594.30px;width:40px;text-align:center;top:456.67px;font-size:10.2px;color:#4a4a4a;font-weight:normal;">0</div>
<div class="t" style="left:630.00px;width:40px;text-align:center;top:456.67px;font-size:10.2px;color:#4a4a4a;font-weight:normal;">0</div>
<div class="t" style="left:665.50px;width:40px;text-align:center;top:456.67px;font-size:10.2px;color:#4a4a4a;font-weight:normal;">0</div>
<div class="t" style="left:702.50px;width:40px;text-align:center;top:456.67px;font-size:10.2px;color:#4a4a4a;font-weight:normal;">1</div>
<div class="t" style="left:739.30px;width:40px;text-align:center;top:456.67px;font-size:10.2px;color:#4a4a4a;font-weight:normal;">16</div>
<div class="t" style="left:776.30px;width:40px;text-align:center;top:456.67px;font-size:10.2px;color:#4a4a4a;font-weight:normal;">11</div>
<div class="t" style="left:813.00px;width:40px;text-align:center;top:456.67px;font-size:10.2px;color:#4a4a4a;font-weight:normal;">14</div>
<div class="t" style="left:850.00px;width:40px;text-align:center;top:456.67px;font-size:10.2px;color:#4a4a4a;font-weight:normal;">26</div>
<div class="t" style="left:886.60px;width:40px;text-align:center;top:456.67px;font-size:10.2px;color:#4a4a4a;font-weight:normal;">13</div>
<div class="t" style="left:923.80px;width:40px;text-align:center;top:456.67px;font-size:10.2px;color:#4a4a4a;font-weight:normal;">6</div>
<div class="t" style="left:962.80px;width:40px;text-align:center;top:456.67px;font-size:10.2px;color:#4a4a4a;font-weight:normal;">21</div>
<div class="t" style="left:1001.60px;width:40px;text-align:center;top:456.67px;font-size:10.2px;color:#4a4a4a;font-weight:normal;">7</div>
<div class="t" style="left:1040.30px;width:40px;text-align:center;top:456.67px;font-size:10.2px;color:#4a4a4a;font-weight:normal;">10</div>
<div class="t" style="left:1077.80px;width:40px;text-align:center;top:456.67px;font-size:10.2px;color:#4a4a4a;font-weight:normal;">19</div>
<div class="t" style="left:1124.80px;width:40px;text-align:center;top:456.67px;font-size:10.2px;color:#4a4a4a;font-weight:normal;">36</div>
<div class="r" style="left:453.20px;top:471.50px;width:722.60px;height:21.20px;background:#f8f8f8;"></div>
<div class="t" style="left:457.60px;top:477.97px;font-size:10.2px;color:#4a4a4a;font-weight:normal;">Partial</div>
<div class="t" style="left:514.50px;width:40px;text-align:center;top:477.97px;font-size:10.2px;color:#4a4a4a;font-weight:normal;">0</div>
<div class="t" style="left:555.30px;width:40px;text-align:center;top:477.97px;font-size:10.2px;color:#4a4a4a;font-weight:normal;">0</div>
<div class="t" style="left:594.30px;width:40px;text-align:center;top:477.97px;font-size:10.2px;color:#4a4a4a;font-weight:normal;">0</div>
<div class="t" style="left:630.00px;width:40px;text-align:center;top:477.97px;font-size:10.2px;color:#4a4a4a;font-weight:normal;">0</div>
<div class="t" style="left:665.50px;width:40px;text-align:center;top:477.97px;font-size:10.2px;color:#4a4a4a;font-weight:normal;">0</div>
<div class="t" style="left:702.50px;width:40px;text-align:center;top:477.97px;font-size:10.2px;color:#4a4a4a;font-weight:normal;">0</div>
<div class="t" style="left:739.30px;width:40px;text-align:center;top:477.97px;font-size:10.2px;color:#4a4a4a;font-weight:normal;">3</div>
<div class="t" style="left:776.30px;width:40px;text-align:center;top:477.97px;font-size:10.2px;color:#4a4a4a;font-weight:normal;">0</div>
<div class="t" style="left:813.00px;width:40px;text-align:center;top:477.97px;font-size:10.2px;color:#4a4a4a;font-weight:normal;">2</div>
<div class="t" style="left:850.00px;width:40px;text-align:center;top:477.97px;font-size:10.2px;color:#4a4a4a;font-weight:normal;">1</div>
<div class="t" style="left:886.60px;width:40px;text-align:center;top:477.97px;font-size:10.2px;color:#4a4a4a;font-weight:normal;">2</div>
<div class="t" style="left:923.80px;width:40px;text-align:center;top:477.97px;font-size:10.2px;color:#4a4a4a;font-weight:normal;">0</div>
<div class="t" style="left:962.80px;width:40px;text-align:center;top:477.97px;font-size:10.2px;color:#4a4a4a;font-weight:normal;">0</div>
<div class="t" style="left:1001.60px;width:40px;text-align:center;top:477.97px;font-size:10.2px;color:#4a4a4a;font-weight:normal;">0</div>
<div class="t" style="left:1040.30px;width:40px;text-align:center;top:477.97px;font-size:10.2px;color:#4a4a4a;font-weight:normal;">0</div>
<div class="t" style="left:1077.80px;width:40px;text-align:center;top:477.97px;font-size:10.2px;color:#4a4a4a;font-weight:normal;">0</div>
<div class="t" style="left:457.60px;top:498.87px;font-size:10.2px;color:#4a4a4a;font-weight:normal;">Other</div>
<div class="t" style="left:514.50px;width:40px;text-align:center;top:498.87px;font-size:10.2px;color:#4a4a4a;font-weight:normal;">0</div>
<div class="t" style="left:555.30px;width:40px;text-align:center;top:498.87px;font-size:10.2px;color:#4a4a4a;font-weight:normal;">0</div>
<div class="t" style="left:594.30px;width:40px;text-align:center;top:498.87px;font-size:10.2px;color:#4a4a4a;font-weight:normal;">0</div>
<div class="t" style="left:630.00px;width:40px;text-align:center;top:498.87px;font-size:10.2px;color:#4a4a4a;font-weight:normal;">0</div>
<div class="t" style="left:665.50px;width:40px;text-align:center;top:498.87px;font-size:10.2px;color:#4a4a4a;font-weight:normal;">0</div>
<div class="t" style="left:702.50px;width:40px;text-align:center;top:498.87px;font-size:10.2px;color:#4a4a4a;font-weight:normal;">0</div>
<div class="t" style="left:739.30px;width:40px;text-align:center;top:498.87px;font-size:10.2px;color:#4a4a4a;font-weight:normal;">0</div>
<div class="t" style="left:776.30px;width:40px;text-align:center;top:498.87px;font-size:10.2px;color:#4a4a4a;font-weight:normal;">0</div>
<div class="t" style="left:813.00px;width:40px;text-align:center;top:498.87px;font-size:10.2px;color:#4a4a4a;font-weight:normal;">2</div>
<div class="t" style="left:850.00px;width:40px;text-align:center;top:498.87px;font-size:10.2px;color:#4a4a4a;font-weight:normal;">1</div>
<div class="t" style="left:886.60px;width:40px;text-align:center;top:498.87px;font-size:10.2px;color:#4a4a4a;font-weight:normal;">0</div>
<div class="t" style="left:923.80px;width:40px;text-align:center;top:498.87px;font-size:10.2px;color:#4a4a4a;font-weight:normal;">0</div>
<div class="t" style="left:962.80px;width:40px;text-align:center;top:498.87px;font-size:10.2px;color:#4a4a4a;font-weight:normal;">0</div>
<div class="t" style="left:1001.60px;width:40px;text-align:center;top:498.87px;font-size:10.2px;color:#4a4a4a;font-weight:normal;">0</div>
<div class="t" style="left:1040.30px;width:40px;text-align:center;top:498.87px;font-size:10.2px;color:#4a4a4a;font-weight:normal;">0</div>
<div class="t" style="left:1077.80px;width:40px;text-align:center;top:498.87px;font-size:10.2px;color:#4a4a4a;font-weight:normal;">0</div>
<div class="r" style="left:453.20px;top:513.70px;width:722.60px;height:21.90px;background:#f8f8f8;"></div>
<div class="t" style="left:457.60px;top:520.77px;font-size:10.2px;color:#4a4a4a;font-weight:normal;">Total</div>
<div class="t" style="left:514.50px;width:40px;text-align:center;top:520.77px;font-size:10.2px;color:#4a4a4a;font-weight:normal;">0</div>
<div class="t" style="left:555.30px;width:40px;text-align:center;top:520.77px;font-size:10.2px;color:#4a4a4a;font-weight:normal;">0</div>
<div class="t" style="left:594.30px;width:40px;text-align:center;top:520.77px;font-size:10.2px;color:#4a4a4a;font-weight:normal;">0</div>
<div class="t" style="left:630.00px;width:40px;text-align:center;top:520.77px;font-size:10.2px;color:#4a4a4a;font-weight:normal;">0</div>
<div class="t" style="left:665.50px;width:40px;text-align:center;top:520.77px;font-size:10.2px;color:#4a4a4a;font-weight:normal;">0</div>
<div class="t" style="left:702.50px;width:40px;text-align:center;top:520.77px;font-size:10.2px;color:#4a4a4a;font-weight:normal;">4</div>
<div class="t" style="left:739.30px;width:40px;text-align:center;top:520.77px;font-size:10.2px;color:#4a4a4a;font-weight:normal;">22</div>
<div class="t" style="left:776.30px;width:40px;text-align:center;top:520.77px;font-size:10.2px;color:#4a4a4a;font-weight:normal;">17</div>
<div class="t" style="left:813.00px;width:40px;text-align:center;top:520.77px;font-size:10.2px;color:#4a4a4a;font-weight:normal;">23</div>
<div class="t" style="left:850.00px;width:40px;text-align:center;top:520.77px;font-size:10.2px;color:#4a4a4a;font-weight:normal;">39</div>
<div class="t" style="left:886.60px;width:40px;text-align:center;top:520.77px;font-size:10.2px;color:#4a4a4a;font-weight:normal;">19</div>
<div class="t" style="left:923.80px;width:40px;text-align:center;top:520.77px;font-size:10.2px;color:#4a4a4a;font-weight:normal;">11</div>
<div class="t" style="left:962.80px;width:40px;text-align:center;top:520.77px;font-size:10.2px;color:#4a4a4a;font-weight:normal;">21</div>
<div class="t" style="left:1001.60px;width:40px;text-align:center;top:520.77px;font-size:10.2px;color:#4a4a4a;font-weight:normal;">7</div>
<div class="t" style="left:1040.30px;width:40px;text-align:center;top:520.77px;font-size:10.2px;color:#4a4a4a;font-weight:normal;">12</div>
<div class="t" style="left:1077.80px;width:40px;text-align:center;top:520.77px;font-size:10.2px;color:#4a4a4a;font-weight:normal;">22</div>
<div class="t" style="left:1124.80px;width:40px;text-align:center;top:520.77px;font-size:10.2px;color:#4a4a4a;font-weight:normal;">42</div>
<div class="r" style="left:1188.50px;top:38.00px;width:11.50px;height:649.00px;background:#f1f1f1;"></div>
<svg class="r" style="left:1189px;top:40px;" width="11" height="8" viewBox="0 0 11 8"><path d="M2.5 6 L5.5 3 L8.5 6 Z" fill="#a3a3a3"/></svg>
<div class="r" style="left:1190.20px;top:49.40px;width:8.50px;height:621.20px;background:#c1c1c1;"></div>
<div class="r" style="left:0.00px;top:38.00px;width:51.00px;height:1.00px;background:rgba(0,34,60,0.45);"></div>
<div class="r" style="left:51.00px;top:38.00px;width:56.00px;height:1.00px;background:rgba(0,103,177,0.45);"></div>
<div class="r" style="left:107.00px;top:38.00px;width:1054.00px;height:1.00px;background:rgba(0,44,79,0.45);"></div>
<div class="r" style="left:1161.00px;top:38.00px;width:39.00px;height:1.00px;background:rgba(0,103,177,0.45);"></div>
</body></html>
